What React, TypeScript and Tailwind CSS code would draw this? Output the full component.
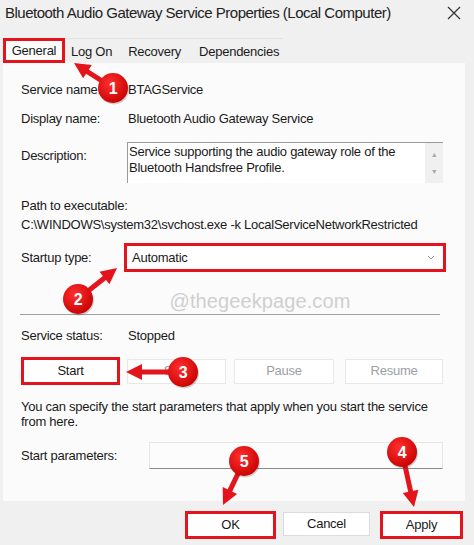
import React from "react";

const RED = "#e3141b";

function Badge({ x, y, n }: { x: number; y: number; n: string }) {
  return (
    <g>
      <circle cx={x + 1} cy={y + 1.5} r={15} fill="#000" opacity={0.18} />
      <circle cx={x} cy={y} r={15} fill="url(#badge)" />
      <text
        x={x}
        y={y + 5.5}
        textAnchor="middle"
        fontFamily="Liberation Sans, Arial, sans-serif"
        fontWeight={700}
        fontSize={16}
        fill="#fff"
      >
        {n}
      </text>
    </g>
  );
}

function Arrow({ x1, y1, x2, y2 }: { x1: number; y1: number; x2: number; y2: number }) {
  const dx = x2 - x1;
  const dy = y2 - y1;
  const len = Math.hypot(dx, dy);
  const ux = dx / len;
  const uy = dy / len;
  const head = 16;
  const half = 8;
  const bx = x2 - ux * head;
  const by = y2 - uy * head;
  const pts = `${x2},${y2} ${bx - uy * half},${by + ux * half} ${bx + uy * half},${by - ux * half}`;
  return (
    <g>
      <line x1={x1} y1={y1} x2={bx + ux * 2} y2={by + uy * 2} stroke={RED} strokeWidth={5} />
      <polygon points={pts} fill={RED} />
    </g>
  );
}

function Overlay() {
  return (
    <svg className="pointer-events-none absolute inset-0" width={474} height={545}>
      <defs>
        <radialGradient id="badge" cx="40%" cy="35%" r="70%">
          <stop offset="0%" stopColor="#ff3030" />
          <stop offset="100%" stopColor="#c80000" />
        </radialGradient>
      </defs>
      <Arrow x1={113} y1={88} x2={74} y2={63} />
      <Arrow x1={78} y1={299} x2={117} y2={268} />
      <Arrow x1={183} y1={372} x2={126} y2={372} />
      <Arrow x1={244} y1={461} x2={223} y2={505} />
      <Arrow x1={402} y1={452} x2={414} y2={507} />
      <Badge x={113} y={88} n="1" />
      <Badge x={78} y={299} n="2" />
      <Badge x={183} y={372} n="3" />
      <Badge x={402} y={452} n="4" />
      <Badge x={244} y={461} n="5" />
    </svg>
  );
}

function Row({ label, children, className = "" }: { label: string; children: React.ReactNode; className?: string }) {
  return (
    <div className={`flex items-center ${className}`}>
      <span className="w-[107px] shrink-0">{label}</span>
      {children}
    </div>
  );
}

export default function App() {
  return (
    <div
      className="relative h-[545px] w-[474px] overflow-hidden bg-[#f0f0f0] text-[13px] leading-[16px] tracking-[-0.25px] text-[#1a1a1a]"
      style={{ fontFamily: '"Liberation Sans", Arial, sans-serif' }}
    >
      {/* title bar */}
      <div className="flex h-[25px] items-center justify-between pl-[5px] pr-[13px]">
        <span className="text-[15px] tracking-[-0.5px] text-[#222]">
          Bluetooth Audio Gateway Service Properties (Local Computer)
        </span>
        <svg width="14" height="14" viewBox="0 0 14 14" className="text-[#333]">
          <path d="M1 1 13 13M13 1 1 13" stroke="currentColor" strokeWidth="1.2" />
        </svg>
      </div>

      {/* tabs */}
      <div className="ml-[3px] mt-[13px] flex h-[25px] w-[280px] items-end border-t border-[#e2e2e2]">
        <div className="-mt-[4px] flex h-[25px] w-[62px] items-center justify-center border-[3px] border-[#e3141b] bg-[#fbfbfb]">
          General
        </div>
        <div className="flex h-[22px] items-center pl-[6px]">Log On</div>
        <div className="flex h-[22px] items-center pl-[16px]">Recovery</div>
        <div className="flex h-[22px] items-center pl-[18px]">Dependencies</div>
      </div>

      {/* panel */}
      <div className="ml-[3px] h-[438px] w-[462px] bg-[#fbfbfb] pl-[18px] pt-[17px]">
        <Row label="Service name:" className="h-[20px]">
          <span>BTAGService</span>
        </Row>
        <Row label="Display name:" className="mt-[9px] h-[20px]">
          <span>Bluetooth Audio Gateway Service</span>
        </Row>
        <div className="mt-[13px] flex items-start">
          <span className="w-[106px] shrink-0 pt-[6px]">Description:</span>
          <div className="flex h-[41px] w-[316px] border-l border-t border-[#9a9a9a] bg-white">
            <div className="flex-1 pl-[1px] pt-[1px] leading-[16px]">
              Service supporting the audio gateway role of the
              <br />
              Bluetooth Handsfree Profile.
            </div>
            <div className="flex w-[18px] flex-col items-center justify-around bg-[#f0f0f0] py-[3px] text-[7px] leading-none text-[#a8a8a8]">
              <span>▲</span>
              <span>▼</span>
            </div>
          </div>
        </div>
        <div className="mt-[13px] leading-[19px]">Path to executable:</div>
        <div className="leading-[19px]">C:\WINDOWS\system32\svchost.exe -k LocalServiceNetworkRestricted</div>
        <div className="mt-[9px] flex items-center">
          <span className="w-[103px] shrink-0">Startup type:</span>
          <div className="flex h-[29px] w-[322px] items-center justify-between border-[3px] border-[#e3141b] bg-white pl-[5px] pr-[8px]">
            <span>Automatic</span>
            <svg width="8" height="5" viewBox="0 0 8 5">
              <path d="M1 1 4 4 7 1" fill="none" stroke="#999" strokeWidth="1" />
            </svg>
          </div>
        </div>
        <div className="mt-[17px] flex h-[25px] justify-center pl-[34px]">
          <span className="text-[20px] leading-[25px] tracking-[0.1px] text-[#cfcfcf]">@thegeekpage.com</span>
        </div>
        <div className="-ml-px h-px w-[420px] bg-[#a0a0a0]" />
        <Row label="Service status:" className="mt-[11px] h-[20px]">
          <span>Stopped</span>
        </Row>
        <div className="mt-[11px] flex h-[28px] items-center">
          <div className="flex h-[28px] w-[99px] items-center justify-center border-[3px] border-[#e3141b] bg-white">
            Start
          </div>
          <div className="ml-[7px] flex h-[25px] w-[99px] items-center justify-center border border-[#e8e8e8] bg-white text-[#9a9a9a]">
            Stop
          </div>
          <div className="ml-[8px] flex h-[25px] w-[100px] items-center justify-center border border-[#e8e8e8] bg-white text-[#9aa0a6]">
            Pause
          </div>
          <div className="ml-[11px] flex h-[25px] w-[98px] items-center justify-center border border-[#e8e8e8] bg-white text-[#9aa0a6]">
            Resume
          </div>
        </div>
        <div className="mt-[14px] w-[430px] leading-[15px]">
          You can specify the start parameters that apply when you start the service from here.
        </div>
        <div className="mt-[13px] flex items-center">
          <span className="w-[128px] shrink-0">Start parameters:</span>
          <div className="h-[27px] w-[294px] border border-b-[#8a8a8a] border-[#e6e6e6] bg-[#fcfcfc]" />
        </div>
      </div>

      {/* bottom buttons */}
      <div className="flex justify-end pr-[11px] pt-[10px]">
        <div className="flex h-[28px] w-[91px] items-center justify-center border-[3px] border-[#e3141b] bg-white">
          OK
        </div>
        <div className="ml-[7px] mt-[1px] flex h-[24px] w-[87px] items-center justify-center border border-[#dcdcdc] bg-white">
          Cancel
        </div>
        <div className="ml-[10px] flex h-[28px] w-[83px] items-center justify-center border-[3px] border-[#e3141b] bg-white">
          Apply
        </div>
      </div>

      <Overlay />
    </div>
  );
}
